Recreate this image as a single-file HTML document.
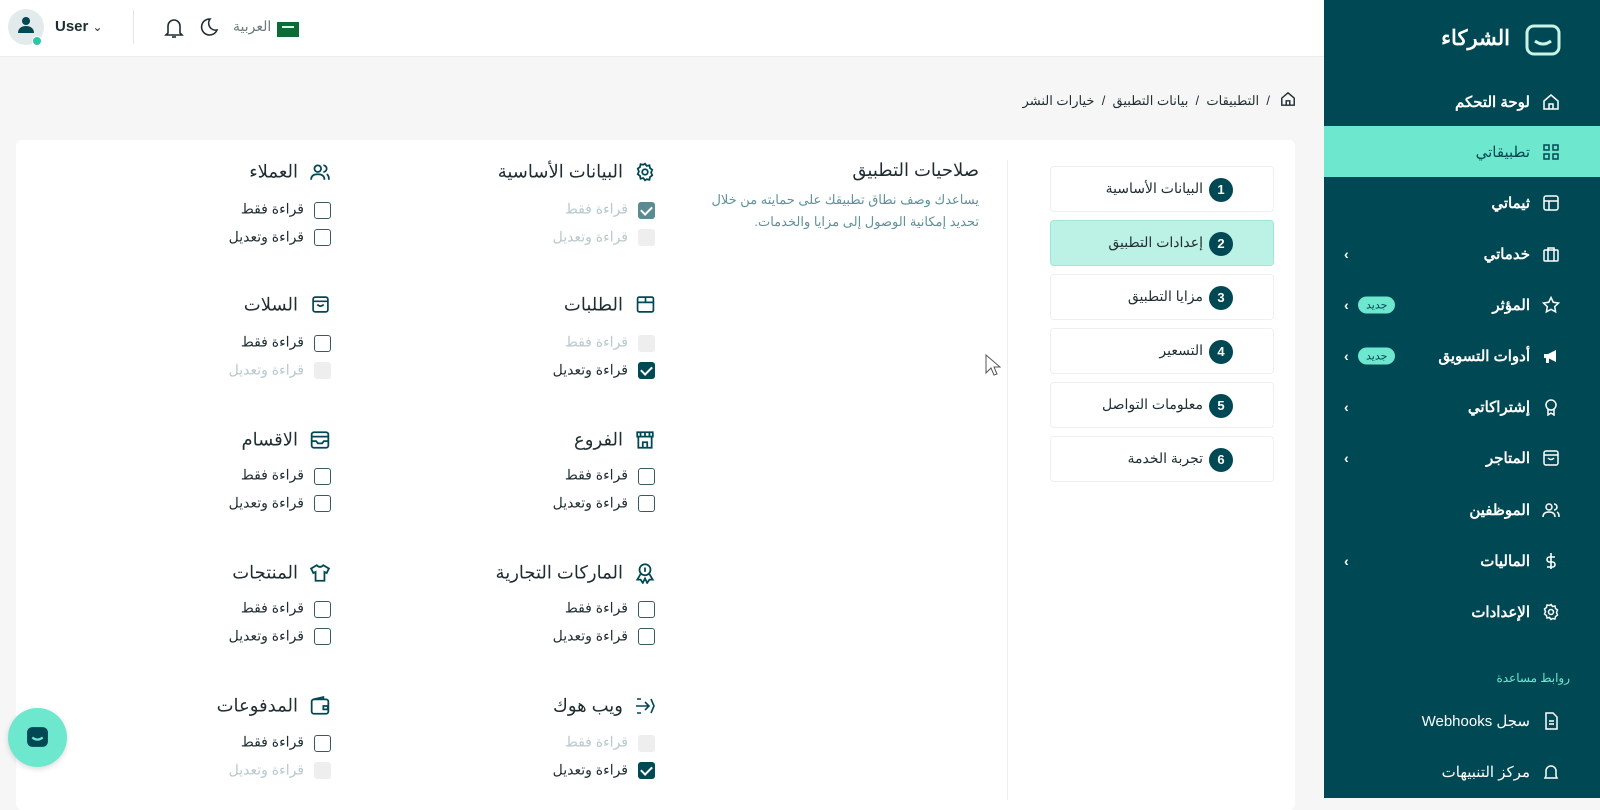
<!DOCTYPE html>
<html><head><meta charset="utf-8"><style>
*{margin:0;padding:0;box-sizing:border-box}
body{width:1600px;height:798px;overflow:hidden;background:#f6f6f6;font-family:"Liberation Sans","Noto Sans CJK SC",sans-serif;position:relative;color:#1f2d30}
.a{position:absolute}
.r{direction:rtl;white-space:nowrap}
#sb{left:1324px;top:0;width:276px;height:798px;background:#004853}
.si{position:absolute;left:1324px;width:276px;height:51px;color:#fff;font-size:15px;font-weight:bold}
.si .t{position:absolute;right:70px;top:50%;transform:translateY(-50%);direction:rtl;white-space:nowrap}
.si svg{position:absolute;right:40px;top:50%;margin-top:-9px}
.si .ch{position:absolute;left:20px;top:50%;transform:translateY(-50%);font-size:14px}
.badge{position:absolute;left:34px;top:50%;transform:translateY(-50%);background:#6ee7cf;color:#004853;font-size:11px;border-radius:10px;padding:2px 8px;font-weight:normal}
.step{position:absolute;left:1050px;width:224px;height:46px;background:#fff;border:1px solid #eef0f0;border-radius:4px}
.step .n{position:absolute;right:40px;top:11px;width:24px;height:24px;border-radius:50%;background:#004853;color:#fff;font-size:13px;font-weight:bold;text-align:center;line-height:24px}
.step .t{position:absolute;right:70px;top:13px;font-size:14px;direction:rtl;white-space:nowrap;color:#1f2d30}
.pt{position:absolute;font-size:18px;direction:rtl;white-space:nowrap;color:#1f2d30;transform:translateY(-50%)}
.cb{position:absolute;width:17px;height:17px;border:1.5px solid #3b5a60;border-radius:3px;background:#fff}
.cb.d{border:none;background:#eeeeee}
.cb.c{border:none;background:#004853}
.cb.cd{border:none;background:#5b8b92}
.cb.c::after,.cb.cd::after{content:"";position:absolute;left:5px;top:2px;width:5px;height:9px;border:solid #fff;border-width:0 2px 2px 0;transform:rotate(45deg)}
.lb{position:absolute;font-size:14px;direction:rtl;white-space:nowrap;color:#1f2d30;transform:translateY(-50%)}
.lb.d{color:#b9c9cb}
.ic{position:absolute;stroke:#004853;fill:none;stroke-width:1.6}
</style></head><body>
<!-- header -->
<div class="a" style="left:0;top:0;width:1324px;height:57px;background:#fff;border-bottom:1px solid #eee"></div>
<div class="a" style="left:8px;top:9px;width:36px;height:36px;border-radius:50%;background:#e3eaeb"></div>
<svg class="a" style="left:16px;top:15px" width="20" height="20" viewBox="0 0 20 20"><circle cx="10" cy="6" r="4" fill="#004853"/><path d="M2 18c0-5 4-7 8-7s8 2 8 7z" fill="#004853"/></svg>
<div class="a" style="left:32px;top:36px;width:10px;height:10px;border-radius:50%;background:#2ec4a5;border:1.5px solid #fff"></div>
<div class="a" style="left:55px;top:18px;font-size:15px;font-weight:bold;color:#1f2d30">User <span style="font-weight:normal;font-size:12px">&#8964;</span></div>
<div class="a" style="left:133px;top:10px;width:1px;height:34px;background:#e6e6e6"></div>
<svg class="a" style="left:164px;top:17px" width="20" height="22" viewBox="0 0 20 22" fill="none" stroke="#1f2d30" stroke-width="1.6"><path d="M4 16V9a6 6 0 0 1 12 0v7l2 2H2z"/><path d="M8 20h4"/></svg>
<svg class="a" style="left:199px;top:17px" width="20" height="20" viewBox="0 0 20 20" fill="none" stroke="#1f2d30" stroke-width="1.6"><path d="M11 2a8 8 0 1 0 7 11A7 7 0 0 1 11 2z"/></svg>
<div class="a r" style="left:233px;top:18px;font-size:14px;color:#6b7a7c">العربية</div>
<div class="a" style="left:277px;top:22px;width:22px;height:15px;background:#0d6b35"><div style="margin:4px 5px;height:2px;background:#cfe"></div></div>
<!-- sidebar -->
<div id="sb" class="a"></div>
<div class="a r" style="right:90px;top:26px;color:#fff;font-size:21px;font-weight:bold">الشركاء</div>
<svg class="a" style="left:1525px;top:24px" width="36" height="32" viewBox="0 0 36 32"><rect x="2" y="2" width="32" height="28" rx="7" fill="none" stroke="#c8f4e8" stroke-width="3"/><path d="M10 17q8 6 16 0" stroke="#c8f4e8" stroke-width="3" fill="none"/></svg>
<div class="a" style="left:1324px;top:126px;width:276px;height:51px;background:#6ee7cf"></div>
<div class="si" style="top:76px"><span class="t">لوحة التحكم</span><svg width="18" height="18" viewBox="0 0 18 18" fill="none" stroke="#fff" stroke-width="1.5"><path d="M2 8l7-6 7 6v8H2z"/><path d="M7 16v-5h4v5"/></svg></div>
<div class="si" style="top:126px;color:#004853;font-weight:normal"><span class="t">تطبيقاتي</span><svg width="18" height="18" viewBox="0 0 18 18" fill="none" stroke="#004853" stroke-width="1.5"><rect x="2" y="2" width="5" height="5"/><rect x="11" y="2" width="5" height="5"/><rect x="2" y="11" width="5" height="5"/><rect x="11" y="11" width="5" height="5"/></svg></div>
<div class="si" style="top:177px"><span class="t">ثيماتي</span><svg width="18" height="18" viewBox="0 0 18 18" fill="none" stroke="#fff" stroke-width="1.5"><rect x="2" y="2" width="14" height="14" rx="2"/><path d="M2 7h14M7 7v9"/></svg></div>
<div class="si" style="top:228px"><span class="t">خدماتي</span><span class="ch">&#8249;</span><svg width="18" height="18" viewBox="0 0 18 18" fill="none" stroke="#fff" stroke-width="1.5"><rect x="2" y="5" width="14" height="11" rx="1"/><path d="M6 5V3h6v2M6 5v11M12 5v11"/></svg></div>
<div class="si" style="top:279px"><span class="t">المؤثر</span><span class="badge">جديد</span><span class="ch">&#8249;</span><svg width="18" height="18" viewBox="0 0 18 18" fill="none" stroke="#fff" stroke-width="1.5"><path d="M9 1.5l2.3 4.8 5.2.7-3.8 3.6.9 5.2L9 13.3l-4.6 2.5.9-5.2L1.5 7l5.2-.7z"/></svg></div>
<div class="si" style="top:330px"><span class="t">أدوات التسويق</span><span class="badge">جديد</span><span class="ch">&#8249;</span><svg width="18" height="18" viewBox="0 0 18 18" fill="#fff"><path d="M2 7h4l8-4v12l-8-4H2z"/><rect x="4" y="11" width="3" height="5"/></svg></div>
<div class="si" style="top:381px"><span class="t">إشتراكاتي</span><span class="ch">&#8249;</span><svg width="18" height="18" viewBox="0 0 18 18" fill="none" stroke="#fff" stroke-width="1.5"><circle cx="9" cy="7" r="5"/><path d="M6 11v6l3-2 3 2v-6"/></svg></div>
<div class="si" style="top:432px"><span class="t">المتاجر</span><span class="ch">&#8249;</span><svg width="18" height="18" viewBox="0 0 18 18" fill="none" stroke="#fff" stroke-width="1.5"><rect x="2" y="2" width="14" height="14" rx="2"/><path d="M2 6h14M6 9q3 3 6 0"/></svg></div>
<div class="si" style="top:484px"><span class="t">الموظفين</span><svg width="18" height="18" viewBox="0 0 18 18" fill="none" stroke="#fff" stroke-width="1.5"><circle cx="7" cy="6" r="3"/><path d="M1 16c0-4 3-5 6-5s6 1 6 5M12 3a3 3 0 0 1 0 6M15 11c2 1 2 3 2 5"/></svg></div>
<div class="si" style="top:535px"><span class="t">الماليات</span><span class="ch">&#8249;</span><svg width="18" height="18" viewBox="0 0 18 18" fill="none" stroke="#fff" stroke-width="1.6"><path d="M9 1v16M13 5H7.5a2.5 2.5 0 0 0 0 5h3a2.5 2.5 0 0 1 0 5H5"/></svg></div>
<div class="si" style="top:586px"><span class="t">الإعدادات</span><svg width="18" height="18" viewBox="0 0 18 18" fill="none" stroke="#fff" stroke-width="1.5"><circle cx="9" cy="9" r="2.5"/><path d="M9 1.5l1.5 2 2.5-.5.5 2.5 2 1.5-1 2.5 1 2.5-2 1.5-.5 2.5-2.5-.5L9 16.5l-1.5-2-2.5.5-.5-2.5-2-1.5 1-2.5-1-2.5 2-1.5.5-2.5 2.5.5z"/></svg></div>
<div class="a r" style="right:30px;top:671px;font-size:12px;color:#6ee7cf">روابط مساعدة</div>
<div class="si" style="top:695px;font-weight:normal"><span class="t">سجل Webhooks</span><svg width="18" height="18" viewBox="0 0 18 18" fill="none" stroke="#fff" stroke-width="1.5"><path d="M4 1h7l4 4v12H4z"/><path d="M7 9h5M7 12h5"/></svg></div>
<div class="si" style="top:746px;font-weight:normal"><span class="t">مركز التنبيهات</span><svg width="18" height="18" viewBox="0 0 18 18" fill="none" stroke="#fff" stroke-width="1.5"><path d="M4 13V8a5 5 0 0 1 10 0v5l1 2H3z"/></svg></div>
<!-- breadcrumb -->
<div class="a r" style="right:330px;top:93px;font-size:13px;color:#1f2d30">/ &nbsp;التطبيقات &nbsp;/&nbsp; بيانات التطبيق &nbsp;/&nbsp; خيارات النشر</div>
<svg class="a" style="left:1280px;top:91px" width="16" height="16" viewBox="0 0 18 18" fill="none" stroke="#1f2d30" stroke-width="1.6"><path d="M2 8l7-6 7 6v8H2z"/><path d="M7 16v-5h4v5"/></svg>
<!-- card -->
<div class="a" style="left:16px;top:140px;width:1279px;height:670px;background:#fff;border-radius:6px"></div>
<div class="a" style="left:1007px;top:160px;width:1px;height:640px;background:#eee"></div>
<div class="step" style="top:166px"><span class="n">1</span><span class="t">البيانات الأساسية</span></div>
<div class="step" style="top:220px;background:#bcf2e5;border-color:#9fe6d4"><span class="n">2</span><span class="t">إعدادات التطبيق</span></div>
<div class="step" style="top:274px"><span class="n">3</span><span class="t">مزايا التطبيق</span></div>
<div class="step" style="top:328px"><span class="n">4</span><span class="t">التسعير</span></div>
<div class="step" style="top:382px"><span class="n">5</span><span class="t">معلومات التواصل</span></div>
<div class="step" style="top:436px"><span class="n">6</span><span class="t">تجربة الخدمة</span></div>
<div class="a r" style="right:621px;top:160px;font-size:18px">صلاحيات التطبيق</div>
<div class="a r" style="right:621px;top:189px;font-size:13px;color:#5f9299;line-height:22px">يساعدك وصف نطاق تطبيقك على حمايته من خلال<br>تحديد إمكانية الوصول إلى مزايا والخدمات.</div>
<!-- col1 -->
<svg class="ic" style="left:635px;top:162px" width="20" height="20" viewBox="0 0 18 18"><circle cx="9" cy="9" r="2.5"/><path d="M9 1.5l1.5 2 2.5-.5.5 2.5 2 1.5-1 2.5 1 2.5-2 1.5-.5 2.5-2.5-.5L9 16.5l-1.5-2-2.5.5-.5-2.5-2-1.5 1-2.5-1-2.5 2-1.5.5-2.5 2.5.5z"/></svg>
<div class="pt" style="right:977px;top:172px">البيانات الأساسية</div>
<div class="cb cd" style="left:638px;top:202px"></div><div class="lb d" style="right:972px;top:209px">قراءة فقط</div>
<div class="cb d" style="left:638px;top:229px"></div><div class="lb d" style="right:972px;top:237px">قراءة وتعديل</div>
<svg class="ic" style="left:636px;top:295px" width="19" height="19" viewBox="0 0 18 18"><rect x="1.5" y="2" width="15" height="14" rx="1.5"/><path d="M1.5 7h15M9 2v5"/></svg>
<div class="pt" style="right:977px;top:305px">الطلبات</div>
<div class="cb d" style="left:638px;top:335px"></div><div class="lb d" style="right:972px;top:342px">قراءة فقط</div>
<div class="cb c" style="left:638px;top:362px"></div><div class="lb" style="right:972px;top:370px">قراءة وتعديل</div>
<svg class="ic" style="left:635px;top:430px" width="20" height="20" viewBox="0 0 18 18"><path d="M2 2h14v4H2zM3 6v10h12V6M7 16v-5h4v5M5 2v4M9 2v4M13 2v4"/></svg>
<div class="pt" style="right:977px;top:440px">الفروع</div>
<div class="cb" style="left:638px;top:468px"></div><div class="lb" style="right:972px;top:475px">قراءة فقط</div>
<div class="cb" style="left:638px;top:495px"></div><div class="lb" style="right:972px;top:503px">قراءة وتعديل</div>
<svg class="ic" style="left:635px;top:562px" width="20" height="22" viewBox="0 0 18 20"><circle cx="9" cy="7" r="5"/><path d="M5 11l-3 5h3l2 3 2-4 2 4 2-3h3l-3-5M9 5v4"/></svg>
<div class="pt" style="right:977px;top:573px">الماركات التجارية</div>
<div class="cb" style="left:638px;top:601px"></div><div class="lb" style="right:972px;top:608px">قراءة فقط</div>
<div class="cb" style="left:638px;top:628px"></div><div class="lb" style="right:972px;top:636px">قراءة وتعديل</div>
<svg class="ic" style="left:635px;top:697px" width="20" height="18" viewBox="0 0 20 18"><path d="M1 9h13M10 5l4 4-4 4M6 2h-4M6 16H2M16 2l3 7-3 7"/></svg>
<div class="pt" style="right:977px;top:706px">ويب هوك</div>
<div class="cb d" style="left:638px;top:735px"></div><div class="lb d" style="right:972px;top:742px">قراءة فقط</div>
<div class="cb c" style="left:638px;top:762px"></div><div class="lb" style="right:972px;top:770px">قراءة وتعديل</div>
<!-- col2 -->
<svg class="ic" style="left:310px;top:162px" width="20" height="20" viewBox="0 0 18 18"><circle cx="7" cy="6" r="3"/><path d="M1 16c0-4 3-5 6-5s6 1 6 5M12 3a3 3 0 0 1 0 6M15 11c2 1 2 3 2 5"/></svg>
<div class="pt" style="right:1302px;top:172px">العملاء</div>
<div class="cb" style="left:314px;top:202px"></div><div class="lb" style="right:1296px;top:209px">قراءة فقط</div>
<div class="cb" style="left:314px;top:229px"></div><div class="lb" style="right:1296px;top:237px">قراءة وتعديل</div>
<svg class="ic" style="left:311px;top:295px" width="19" height="19" viewBox="0 0 18 18"><rect x="2" y="2" width="14" height="14" rx="2"/><path d="M2 6h14M6 9q3 3 6 0"/></svg>
<div class="pt" style="right:1302px;top:305px">السلات</div>
<div class="cb" style="left:314px;top:335px"></div><div class="lb" style="right:1296px;top:342px">قراءة فقط</div>
<div class="cb d" style="left:314px;top:362px"></div><div class="lb d" style="right:1296px;top:370px">قراءة وتعديل</div>
<svg class="ic" style="left:310px;top:430px" width="20" height="20" viewBox="0 0 18 18"><rect x="1.5" y="2" width="15" height="14" rx="2"/><path d="M1.5 6h15M1.5 10h4l1.5 2h4l1.5-2h4"/></svg>
<div class="pt" style="right:1302px;top:440px">الاقسام</div>
<div class="cb" style="left:314px;top:468px"></div><div class="lb" style="right:1296px;top:475px">قراءة فقط</div>
<div class="cb" style="left:314px;top:495px"></div><div class="lb" style="right:1296px;top:503px">قراءة وتعديل</div>
<svg class="ic" style="left:310px;top:563px" width="20" height="20" viewBox="0 0 18 18"><path d="M6 2L1 5l2 4 2-1v8h8V8l2 1 2-4-5-3q-3 3-6 0z"/></svg>
<div class="pt" style="right:1302px;top:573px">المنتجات</div>
<div class="cb" style="left:314px;top:601px"></div><div class="lb" style="right:1296px;top:608px">قراءة فقط</div>
<div class="cb" style="left:314px;top:628px"></div><div class="lb" style="right:1296px;top:636px">قراءة وتعديل</div>
<svg class="ic" style="left:310px;top:696px" width="20" height="20" viewBox="0 0 18 18"><rect x="1.5" y="3" width="15" height="13" rx="2"/><path d="M3 3l9-2v2M12 9h4v3h-4z"/></svg>
<div class="pt" style="right:1302px;top:706px">المدفوعات</div>
<div class="cb" style="left:314px;top:735px"></div><div class="lb" style="right:1296px;top:742px">قراءة فقط</div>
<div class="cb d" style="left:314px;top:762px"></div><div class="lb d" style="right:1296px;top:770px">قراءة وتعديل</div>
<!-- chat bubble -->
<div class="a" style="left:8px;top:708px;width:59px;height:59px;border-radius:50%;background:#6ee7cf;box-shadow:0 2px 6px rgba(0,0,0,.15)"></div>
<svg class="a" style="left:25px;top:725px" width="25" height="25" viewBox="0 0 24 24"><rect x="2" y="2" width="20" height="19" rx="5" fill="#004853"/><path d="M7 12q5 4 10 0" stroke="#6ee7cf" stroke-width="2" fill="none"/></svg>
<!-- cursor -->
<svg class="a" style="left:985px;top:354px" width="16" height="24" viewBox="0 0 16 24"><path d="M1 1v18l5-5 3 7 3-1-3-7h6z" fill="#fff" stroke="#555" stroke-width="1"/></svg>
</body></html>
